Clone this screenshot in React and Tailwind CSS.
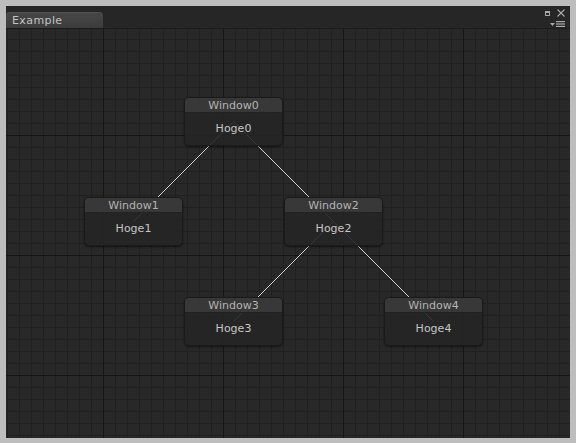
import React from "react";

const NODES = [
  { id: 0, x: 178, y: 68 },
  { id: 1, x: 78, y: 168 },
  { id: 2, x: 278, y: 168 },
  { id: 3, x: 178, y: 268 },
  { id: 4, x: 378, y: 268 },
];
const EDGES = [
  [0, 1],
  [0, 2],
  [2, 3],
  [2, 4],
];
const NW = 99;
const NH = 49;
const W = 564;
const H = 410;

function Grid() {
  const minor = [];
  const major = [];
  for (let x = 1; x < W; x += 12) {
    const isMajor = (x - 97) % 120 === 0;
    const el = (
      <line key={"v" + x} x1={x + 0.5} y1={0} x2={x + 0.5} y2={H} stroke={isMajor ? "#161616" : "#202020"} strokeWidth="1" />
    );
    (isMajor ? major : minor).push(el);
  }
  for (let y = 10; y < H; y += 12) {
    const isMajor = (y - 106) % 120 === 0;
    const el = (
      <line key={"h" + y} x1={0} y1={y + 0.5} x2={W} y2={y + 0.5} stroke={isMajor ? "#161616" : "#202020"} strokeWidth="1" />
    );
    (isMajor ? major : minor).push(el);
  }
  return (
    <svg className="absolute inset-0" width={W} height={H}>
      {minor}
      {major}
    </svg>
  );
}

function Edges() {
  return (
    <svg className="absolute inset-0" width={W} height={H}>
      {EDGES.map(([a, b]) => {
        const A = NODES[a];
        const B = NODES[b];
        return (
          <line
            key={a + "-" + b}
            x1={A.x + NW / 2}
            y1={A.y + NH / 2}
            x2={B.x + NW / 2}
            y2={B.y + NH / 2}
            stroke="#d4d4d4"
            strokeWidth="1"
          />
        );
      })}
    </svg>
  );
}

function Node({ n }) {
  return (
    <div
      className="absolute flex flex-col w-[99px] h-[49px] rounded-[5px] border border-[#1a1a1a] bg-[rgba(37,37,37,0.9)] shadow-[0_1px_2px_rgba(0,0,0,0.5)] overflow-hidden"
      style={{ left: n.x, top: n.y }}
    >
      <div className="h-[15px] bg-[rgba(58,58,58,0.92)] border-b border-[#222222] flex items-center justify-center text-[11px] leading-none text-[#b2b2b2]">
        Window{n.id}
      </div>
      <div className="flex-1 flex items-center justify-center text-[11px] leading-none text-[#c6c6c6] pb-[2px]">
        Hoge{n.id}
      </div>
    </div>
  );
}

export default function App() {
  return (
    <div
      className="w-[576px] h-[443px] bg-[#bdbdbd] pt-[6px] pl-[6px] pr-[6px] pb-[5px]"
      style={{ fontFamily: '"DejaVu Sans", "Liberation Sans", sans-serif' }}
    >
      <div className="w-full h-full flex flex-col bg-[#282828]">
        <div className="h-[23px] flex items-end justify-between bg-[#262626] border-b border-[#1c1c1c] relative">
          <div className="w-[97px] h-[16px] rounded-t-[4px] bg-gradient-to-b from-[#474747] to-[#3c3c3c] border-t border-[#505050] flex items-center pl-[6px] text-[11px] leading-none text-[#c2c2c2] tracking-[0.4px]">
            Example
          </div>
          <div className="absolute right-[5px] top-[3px] flex flex-col items-end gap-[4px]">
            <div className="flex items-center gap-[7px]">
              <svg width="5" height="5" viewBox="0 0 5 5">
                <rect x="0.5" y="0.5" width="4" height="4" fill="none" stroke="#a8a8a8" />
                <rect x="0" y="0" width="5" height="2" fill="#a8a8a8" />
              </svg>
              <svg width="8" height="8" viewBox="0 0 8 8">
                <path d="M0.5 0.5 L7.5 7.5 M7.5 0.5 L0.5 7.5" stroke="#a8a8a8" strokeWidth="1.1" />
              </svg>
            </div>
            <div className="flex items-center gap-[1px]">
              <svg width="5" height="3" viewBox="0 0 5 3">
                <path d="M0 0 L5 0 L2.5 3 Z" fill="#a8a8a8" />
              </svg>
              <svg width="9" height="6" viewBox="0 0 9 6">
                <rect x="0" y="0" width="9" height="1.2" fill="#a8a8a8" />
                <rect x="0" y="2.4" width="9" height="1.2" fill="#a8a8a8" />
                <rect x="0" y="4.8" width="9" height="1.2" fill="#a8a8a8" />
              </svg>
            </div>
          </div>
        </div>
        <div className="flex-1 relative overflow-hidden bg-[#282828]">
          <Grid />
          <Edges />
          {NODES.map((n) => (
            <Node key={n.id} n={n} />
          ))}
        </div>
      </div>
    </div>
  );
}
